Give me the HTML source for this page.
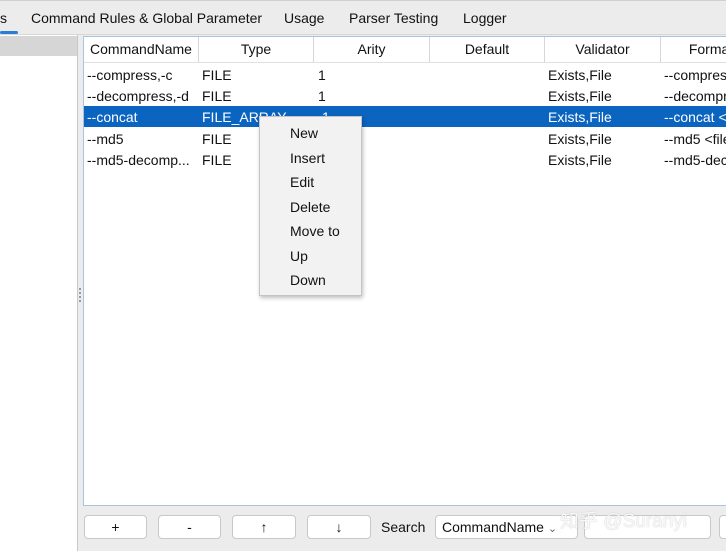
<!DOCTYPE html>
<html><head><style>
*{margin:0;padding:0;box-sizing:border-box}
body{width:726px;height:551px;overflow:hidden;background:#ececec;font-family:"Liberation Sans",Arial,sans-serif;font-size:14px;color:#111;position:relative;white-space:nowrap}
.a{position:absolute}
.tab{top:10px;font-size:14px}
.row{position:absolute;left:84px;width:642px;height:21px;overflow:hidden}
.row span{position:absolute;top:3px}
.hd{position:absolute;top:37px;height:25px;border-right:1px solid #d6d6d6;text-align:center;line-height:25px;font-size:14px;overflow:hidden}
.btn{position:absolute;top:515px;height:24px;background:#fff;border:1px solid #c8c8c8;border-radius:4px;text-align:center;line-height:22px;font-size:14px}
.mi{position:absolute;left:30px;font-size:14px}
</style></head><body>
<div class="a" style="left:0;top:0;width:726px;height:1px;background:#d0d0d0"></div>
<div class="a tab" style="left:0">s</div>
<div class="a" style="left:0;top:31px;width:18px;height:3px;background:#2a7fd4;border-radius:2px"></div>
<div class="a tab" style="left:31px">Command Rules &amp; Global Parameter</div>
<div class="a tab" style="left:284px">Usage</div>
<div class="a tab" style="left:349px">Parser Testing</div>
<div class="a tab" style="left:463px">Logger</div>
<div class="a" style="left:0;top:34px;width:726px;height:1px;background:#d8d8d8"></div>
<div class="a" style="left:0;top:35px;width:77px;height:516px;background:#fff"></div>
<div class="a" style="left:0;top:36px;width:77px;height:20px;background:#d6d6d6"></div>
<div class="a" style="left:77px;top:35px;width:1px;height:516px;background:#c8c8c8"></div>
<div class="a" style="left:79px;top:288px;width:2px;height:14px;border-left:2px dotted #999"></div>
<div class="a" style="left:83px;top:36px;width:650px;height:470px;background:#fff;border:1px solid #a9c4e0"></div>
<div class="a" style="left:84px;top:62px;width:642px;height:1px;background:#e0e0e0"></div>
<div class="hd" style="left:84px;width:115px">CommandName</div>
<div class="hd" style="left:199px;width:115px">Type</div>
<div class="hd" style="left:314px;width:116px">Arity</div>
<div class="hd" style="left:430px;width:115px">Default</div>
<div class="hd" style="left:545px;width:116px">Validator</div>
<div class="hd" style="left:661px;width:100px;border:none">Format</div>
<div class="row" style="top:64px"><span style="left:3px">--compress,-c</span><span style="left:118px">FILE</span><span style="left:234px">1</span><span style="left:464px">Exists,File</span><span style="left:580px">--compress</span></div>
<div class="row" style="top:85px"><span style="left:3px">--decompress,-d</span><span style="left:118px">FILE</span><span style="left:234px">1</span><span style="left:464px">Exists,File</span><span style="left:580px">--decompress</span></div>
<div class="row" style="top:106px;background:#0b64c0;color:#fff"><span style="left:3px">--concat</span><span style="left:118px">FILE_ARRAY</span><span style="left:238px">1</span><span style="left:464px">Exists,File</span><span style="left:580px">--concat &lt;</span></div>
<div class="row" style="top:128px"><span style="left:3px">--md5</span><span style="left:118px">FILE</span><span style="left:464px">Exists,File</span><span style="left:580px">--md5 &lt;file</span></div>
<div class="row" style="top:149px"><span style="left:3px">--md5-decomp...</span><span style="left:118px">FILE</span><span style="left:464px">Exists,File</span><span style="left:580px">--md5-deco</span></div>
<div class="a" style="left:259px;top:116px;width:103px;height:180px;background:#f2f2f2;border:1px solid #c4c4c4;box-shadow:1px 2px 4px rgba(0,0,0,.25)">
<div class="mi" style="top:8px">New</div><div class="mi" style="top:33px">Insert</div><div class="mi" style="top:57px">Edit</div><div class="mi" style="top:82px">Delete</div><div class="mi" style="top:106px">Move to</div><div class="mi" style="top:131px">Up</div><div class="mi" style="top:155px">Down</div>
</div>
<div class="btn" style="left:84px;width:63px">+</div>
<div class="btn" style="left:158px;width:63px">-</div>
<div class="btn" style="left:232px;width:64px">↑</div>
<div class="btn" style="left:307px;width:64px">↓</div>
<div class="a" style="left:381px;top:519px;font-size:14px">Search</div>
<div class="btn" style="left:435px;width:143px;text-align:left;padding-left:6px">CommandName <span style="color:#666;font-size:11px">⌄</span></div>
<div class="btn" style="left:584px;width:127px"></div>
<div class="btn" style="left:719px;width:20px"></div>
<div class="a" style="left:560px;top:506px;font-size:19px;color:rgba(255,255,255,.9);font-family:'Liberation Sans','Noto Sans CJK SC',sans-serif;text-shadow:0 0 1px #aaa">知乎 @Suranyi</div>
</body></html>
